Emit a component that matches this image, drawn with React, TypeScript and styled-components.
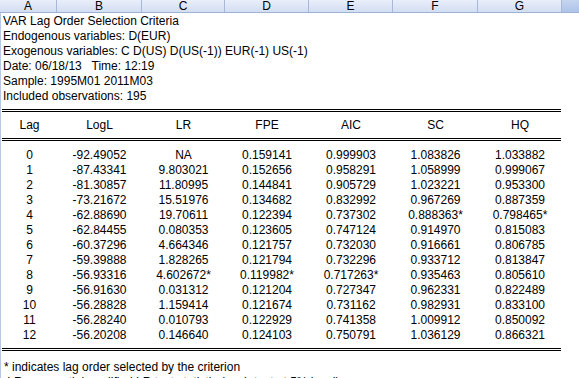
import React from "react";
import styled, { createGlobalStyle } from "styled-components";

const GlobalStyle = createGlobalStyle`
  html, body {
    margin: 0;
    padding: 0;
    background: #fff;
    overflow: hidden;
  }
  body {
    font-family: "Liberation Sans", Arial, sans-serif;
    font-size: 12px;
    color: #000;
  }
`;

const COLS = "57px 85px 83px 84px 84px 85px 84px";

const Sheet = styled.div`
  display: grid;
  grid-template-columns: 562px 17px;
  width: 579px;
  height: 378px;
  overflow: hidden;
`;

const Main = styled.div`
  display: flex;
  flex-direction: column;
`;

const Gutter = styled.div`
  display: flex;
  flex-direction: column;
  justify-content: space-between;
`;

const GutterHead = styled.div`
  height: 12px;
  border-bottom: 1px solid #9fb3d3;
  background: linear-gradient(#c5d5f0, #aec3e8);
`;

const GutterMark = styled.div`
  height: 3px;
  margin: 0 0 5px 0;
  background: repeating-linear-gradient(90deg, #b9cbec 0 1px, #fff 1px 2px);
`;

const ColumnHeader = styled.div`
  display: grid;
  grid-template-columns: ${COLS};
  height: 12px;
  border-bottom: 1px solid #9fb3d3;
  background: linear-gradient(#e9eefa, #d3def3);
`;

const ColumnCell = styled.div`
  display: flex;
  align-items: center;
  justify-content: center;
  border-right: 1px solid #a7b9d6;
  font-size: 12px;
  line-height: 12px;
`;

const Body = styled.div`
  flex: 1;
  border-left: 1px solid #b9c8e2;
  padding-left: 1px;
`;

const Info = styled.div`
  padding: 1px 0 0 1px;
`;

const Line = styled.div`
  height: 15px;
  line-height: 15px;
  white-space: nowrap;
`;

const DoubleRule = styled.div<{ $gap: number }>`
  height: 1px;
  margin-top: ${(p) => p.$gap}px;
  width: 559px;
  border-top: 1px solid #000;
  border-bottom: 1px solid #000;
`;

const Row = styled.div<{ $height?: number }>`
  display: grid;
  grid-template-columns: 55px 85px 83px 84px 84px 85px 84px;
  height: ${(p) => p.$height ?? 15}px;
  align-items: center;
  line-height: 15px;
`;

const Cell = styled.div`
  text-align: center;
  white-space: nowrap;
`;

const Rows = styled.div`
  padding: 7px 0 5px;
`;

const Notes = styled.div`
  padding: 9px 0 0 2px;
`;

const header = ["Lag", "LogL", "LR", "FPE", "AIC", "SC", "HQ"];

const data: string[][] = [
  ["0", "-92.49052", "NA", "0.159141", "0.999903", "1.083826", "1.033882"],
  ["1", "-87.43341", "9.803021", "0.152656", "0.958291", "1.058999", "0.999067"],
  ["2", "-81.30857", "11.80995", "0.144841", "0.905729", "1.023221", "0.953300"],
  ["3", "-73.21672", "15.51976", "0.134682", "0.832992", "0.967269", "0.887359"],
  ["4", "-62.88690", "19.70611", "0.122394", "0.737302", "0.888363*", "0.798465*"],
  ["5", "-62.84455", "0.080353", "0.123605", "0.747124", "0.914970", "0.815083"],
  ["6", "-60.37296", "4.664346", "0.121757", "0.732030", "0.916661", "0.806785"],
  ["7", "-59.39888", "1.828265", "0.121794", "0.732296", "0.933712", "0.813847"],
  ["8", "-56.93316", "4.602672*", "0.119982*", "0.717263*", "0.935463", "0.805610"],
  ["9", "-56.91630", "0.031312", "0.121204", "0.727347", "0.962331", "0.822489"],
  ["10", "-56.28828", "1.159414", "0.121674", "0.731162", "0.982931", "0.833100"],
  ["11", "-56.28240", "0.010793", "0.122929", "0.741358", "1.009912", "0.850092"],
  ["12", "-56.20208", "0.146640", "0.124103", "0.750791", "1.036129", "0.866321"],
];

export default function App() {
  return (
    <>
      <GlobalStyle />
      <Sheet>
        <Main>
          <ColumnHeader>
            {["A", "B", "C", "D", "E", "F", "G"].map((c) => (
              <ColumnCell key={c}>{c}</ColumnCell>
            ))}
          </ColumnHeader>
          <Body>
            <Info>
              <Line>VAR Lag Order Selection Criteria</Line>
              <Line>Endogenous variables: D(EUR)</Line>
              <Line>Exogenous variables: C D(US) D(US(-1)) EUR(-1) US(-1)</Line>
              <Line>Date: 06/18/13&nbsp;&nbsp; Time: 12:19</Line>
              <Line>Sample: 1995M01 2011M03</Line>
              <Line>Included observations: 195</Line>
            </Info>
            <DoubleRule $gap={5} />
            <Row $height={26}>
              {header.map((h) => (
                <Cell key={h}>{h}</Cell>
              ))}
            </Row>
            <DoubleRule $gap={0} />
            <Rows>
              {data.map((r) => (
                <Row key={r[0]}>
                  {r.map((v, i) => (
                    <Cell key={i}>{v}</Cell>
                  ))}
                </Row>
              ))}
            </Rows>
            <DoubleRule $gap={0} />
            <Notes>
              <Line>* indicates lag order selected by the criterion</Line>
              <Line>&nbsp;LR: sequential modified LR test statistic (each test at 5% level)</Line>
            </Notes>
          </Body>
        </Main>
        <Gutter>
          <GutterHead />
          <GutterMark />
        </Gutter>
      </Sheet>
    </>
  );
}
